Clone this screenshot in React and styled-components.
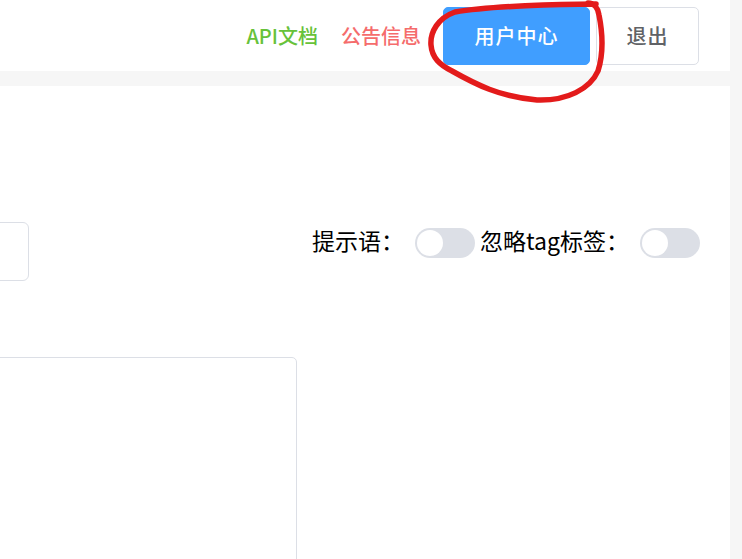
import React from 'react';
import styled, { createGlobalStyle } from 'styled-components';

const GlobalStyle = createGlobalStyle`
    html, body {
        margin: 0;
        padding: 0;
        background: #f6f6f6;
        overflow: hidden;
        font-family: "Noto Sans CJK SC", "Noto Sans", sans-serif;
    }
`;

const Page = styled.div`
    position: relative;
    width: 730px;
    height: 559px;
    display: flex;
    flex-direction: column;
`;

const Header = styled.header`
    height: 71px;
    background: #fff;
    display: flex;
    justify-content: flex-end;
    align-items: center;
    padding-right: 31px;
`;

const NavLink = styled.a`
    font-size: 20px;
    font-weight: 500;
    color: ${(p) => p.color};
    margin-right: ${(p) => p.space}px;
    text-decoration: none;
    cursor: pointer;
`;

const NavButton = styled.button`
    height: 58px;
    width: ${(p) => p.width}px;
    border-radius: 5px;
    font-family: inherit;
    font-size: 20px;
    font-weight: 500;
    cursor: pointer;
    border: 1px solid ${(p) => (p.primary ? '#409eff' : '#dcdfe6')};
    background: ${(p) => (p.primary ? '#409eff' : '#fff')};
    color: ${(p) => (p.primary ? '#fff' : '#606266')};
    margin-left: ${(p) => p.gap || 0}px;
    letter-spacing: 1px;
`;

const Main = styled.main`
    flex: 1;
    margin-top: 15px;
    background: #fff;
    overflow: hidden;
    padding-top: 136px;
`;

const Row = styled.div`
    display: flex;
    justify-content: space-between;
    align-items: flex-start;
    padding-right: 30px;
`;

const TextBox = styled.div`
    width: 240px;
    height: 59px;
    margin-left: -211px;
    border: 1px solid #dcdfe6;
    border-radius: 6px;
    box-sizing: border-box;
`;

const Options = styled.div`
    display: flex;
    align-items: center;
    margin-top: 6px;
`;

const Label = styled.span`
    font-size: 23px;
    line-height: 1;
    padding-bottom: 5px;
    color: #000;
    margin-left: ${(p) => p.gap || 0}px;
    margin-right: 11px;
`;

const Switch = styled.span`
    position: relative;
    width: 60px;
    height: 30px;
    border-radius: 15px;
    background: #dcdfe6;
    display: inline-block;

    &::after {
        content: '';
        position: absolute;
        top: 2px;
        left: 2px;
        width: 26px;
        height: 26px;
        border-radius: 50%;
        background: #fff;
    }
`;

const Editor = styled.div`
    margin-top: 76px;
    margin-left: -200px;
    width: 497px;
    height: 400px;
    border: 1px solid #dcdfe6;
    border-radius: 5px;
    box-sizing: border-box;
`;

const Mark = styled.svg`
    position: absolute;
    left: 0;
    top: 0;
    pointer-events: none;
`;

export default function App() {
    return (
        <>
            <GlobalStyle />
            <Page>
                <Header>
                    <NavLink color="#67c23a" space={23}>API文档</NavLink>
                    <NavLink color="#f56c6c" space={22}>公告信息</NavLink>
                    <NavButton primary width={147}>用户中心</NavButton>
                    <NavButton width={103} gap={6}>退出</NavButton>
                </Header>
                <Main>
                    <Row>
                        <TextBox />
                        <Options>
                            <Label>提示语：</Label>
                            <Switch />
                            <Label gap={5}>忽略tag标签：</Label>
                            <Switch />
                        </Options>
                    </Row>
                    <Editor />
                </Main>
                <Mark width="742" height="110" viewBox="0 0 742 110">
                    <path
                        d="M596,4 C560,4 490,6 455,12 C438,18 430,32 431,45 C432,58 440,65 452,71 C475,84 500,97 537,100 C567,101 590,89 598,71 C604,52 602,30 599,15 C598,8 594,3 588,3"
                        fill="none"
                        stroke="#e31b1b"
                        strokeWidth="5.5"
                        strokeLinecap="round"
                        strokeLinejoin="round"
                    />
                </Mark>
            </Page>
        </>
    );
}
